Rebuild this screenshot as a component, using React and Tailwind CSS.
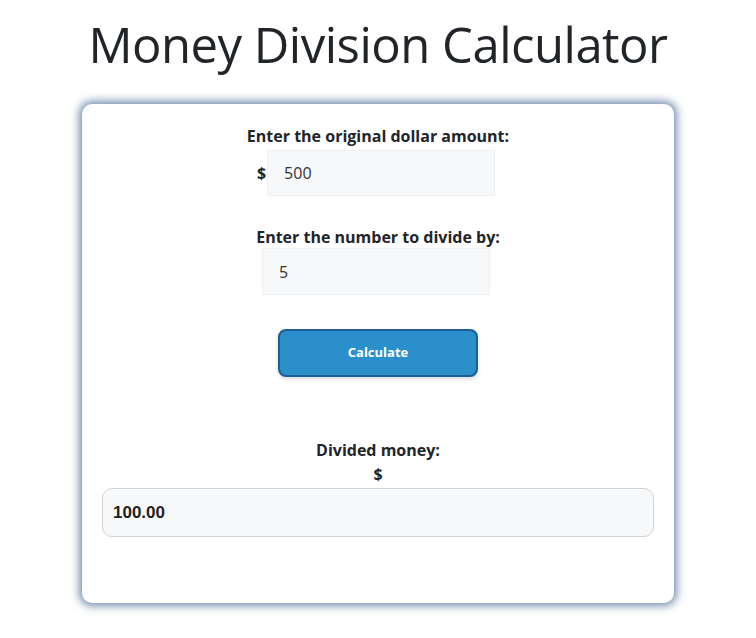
import { useState } from "react";

export default function App() {
  const [amount, setAmount] = useState("500");
  const [divisor, setDivisor] = useState("5");
  const [result, setResult] = useState("100.00");

  const calculate = () => {
    const a = parseFloat(amount);
    const d = parseFloat(divisor);
    if (!isNaN(a) && !isNaN(d) && d !== 0) setResult((a / d).toFixed(2));
  };

  return (
    <div className="min-h-screen bg-white font-['Open_Sans',sans-serif] text-[#212529]">
      <h1 className="pt-[8px] text-center text-[49px] font-normal leading-[72px] tracking-[-0.5px] text-[#212529]">
        Money Division Calculator
      </h1>
      <div className="mx-auto mt-[24px] flex h-[499px] w-[592px] flex-col items-center rounded-[10px] bg-white pt-[21px] shadow-[0_0_9px_3px_rgba(95,125,165,0.85)]">
        <label className="text-[16px] font-bold leading-[22px]">
          Enter the original dollar amount:
        </label>
        <div className="mt-[3px] ml-[-4px] flex items-center">
          <span className="mr-[1px] text-[16px] font-bold">$</span>
          <input
            value={amount}
            onChange={(e) => setAmount(e.target.value)}
            className="h-[46px] w-[228px] border border-[#eef0f2] bg-[#f7f8f9] px-[16px] text-[16px] text-[#333] outline-none"
          />
        </div>
        <label className="mt-[30px] text-[16px] font-bold leading-[22px]">
          Enter the number to divide by:
        </label>
        <input
          value={divisor}
          onChange={(e) => setDivisor(e.target.value)}
          className="ml-[-4px] h-[47px] w-[228px] border border-[#eef0f2] bg-[#f7f8f9] px-[16px] text-[16px] text-[#333] outline-none"
        />
        <button
          onClick={calculate}
          className="mt-[34px] h-[48px] w-[200px] rounded-[8px] border-2 border-[#1b5f98] bg-[#2a8fcb] text-[13px] font-bold text-white shadow-[0_2px_4px_rgba(0,0,0,0.15)]"
        >
          Calculate
        </button>
        <div className="mt-[61px] text-[16px] font-bold leading-[24px]">Divided money:</div>
        <div className="text-[16px] font-bold leading-[24px]">$</div>
        <div className="mt-[2px] flex h-[49px] w-[552px] items-center rounded-[10px] border border-[#d0d3d6] bg-[#f7f8f9] px-[10px] font-['Liberation_Sans',sans-serif] text-[17px] font-bold text-[#222]">
          {result}
        </div>
      </div>
    </div>
  );
}
